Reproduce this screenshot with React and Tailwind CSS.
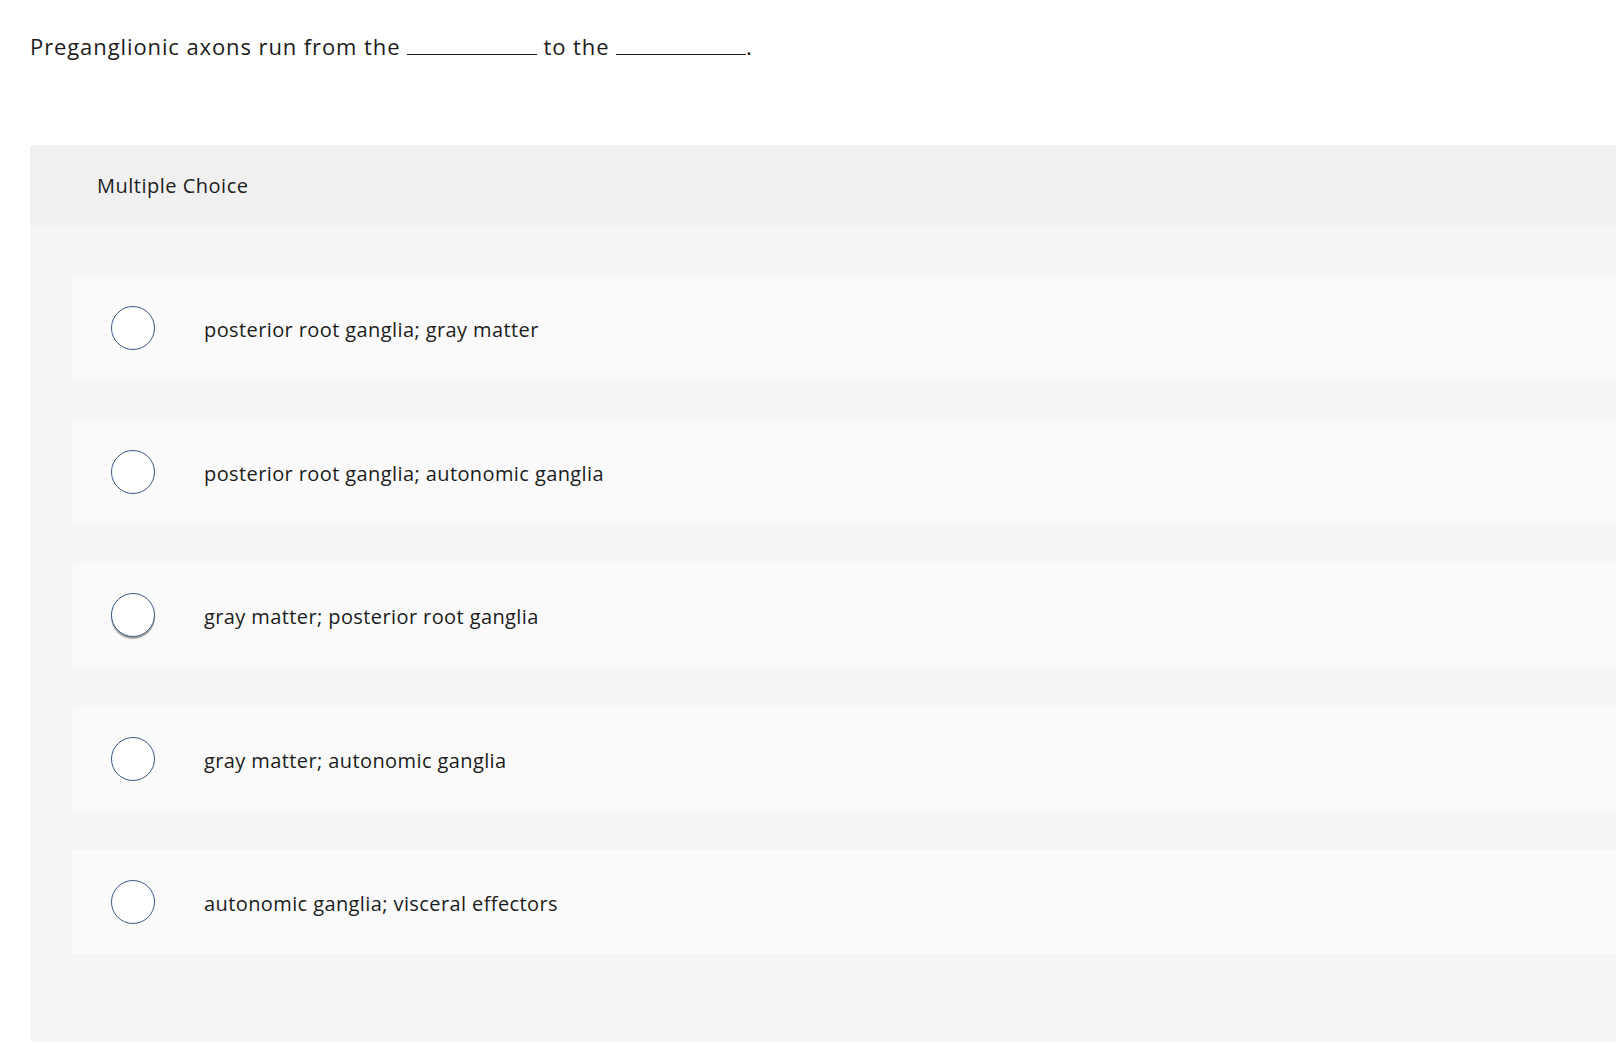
import React from 'react';

const options = [
  'posterior root ganglia; gray matter',
  'posterior root ganglia; autonomic ganglia',
  'gray matter; posterior root ganglia',
  'gray matter; autonomic ganglia',
  'autonomic ganglia; visceral effectors',
];

const Blank = () => (
  <span className="inline-block w-[130px] h-[1px] bg-[#1c1c1c] align-baseline" />
);

const App = () => {
  return (
    <div
      className="w-[1616px] h-[1060px] overflow-hidden bg-white text-[#1c1c1c]"
      style={{ fontFamily: '"Open Sans", Lato, sans-serif' }}
    >
      <p className="pl-[30px] pt-[30px] text-[22px] leading-[32px] tracking-[0.9px]">
        Preganglionic axons run from the <Blank /> to the <Blank />.
      </p>

      <div className="ml-[30px] mt-[83px] w-[1640px] rounded-[4px] bg-[#f5f5f5] overflow-hidden">
        <div className="h-[80px] bg-[#f0f0f0] flex items-center pl-[67px] pt-[2px] text-[20px] tracking-[0.5px]">
          Multiple Choice
        </div>

        <div className="flex flex-col gap-[39.5px] pl-[42px] pt-[51px] pb-[88px]">
          {options.map((option, i) => (
            <div
              key={option}
              className="h-[104px] bg-[#fafafa] rounded-l-[4px] flex items-center"
            >
              <span
                className={`ml-[39px] w-[44px] h-[44px] rounded-full bg-white border-[1.5px] border-[#3c5a86] shrink-0 ${
                  i === 2 ? 'shadow-[0_2px_1px_rgba(0,0,0,0.35)]' : ''
                }`}
              />
              <span className="ml-[49px] pt-[4px] text-[20px] tracking-[0.4px]">{option}</span>
            </div>
          ))}
        </div>
      </div>
    </div>
  );
};

export default App;
